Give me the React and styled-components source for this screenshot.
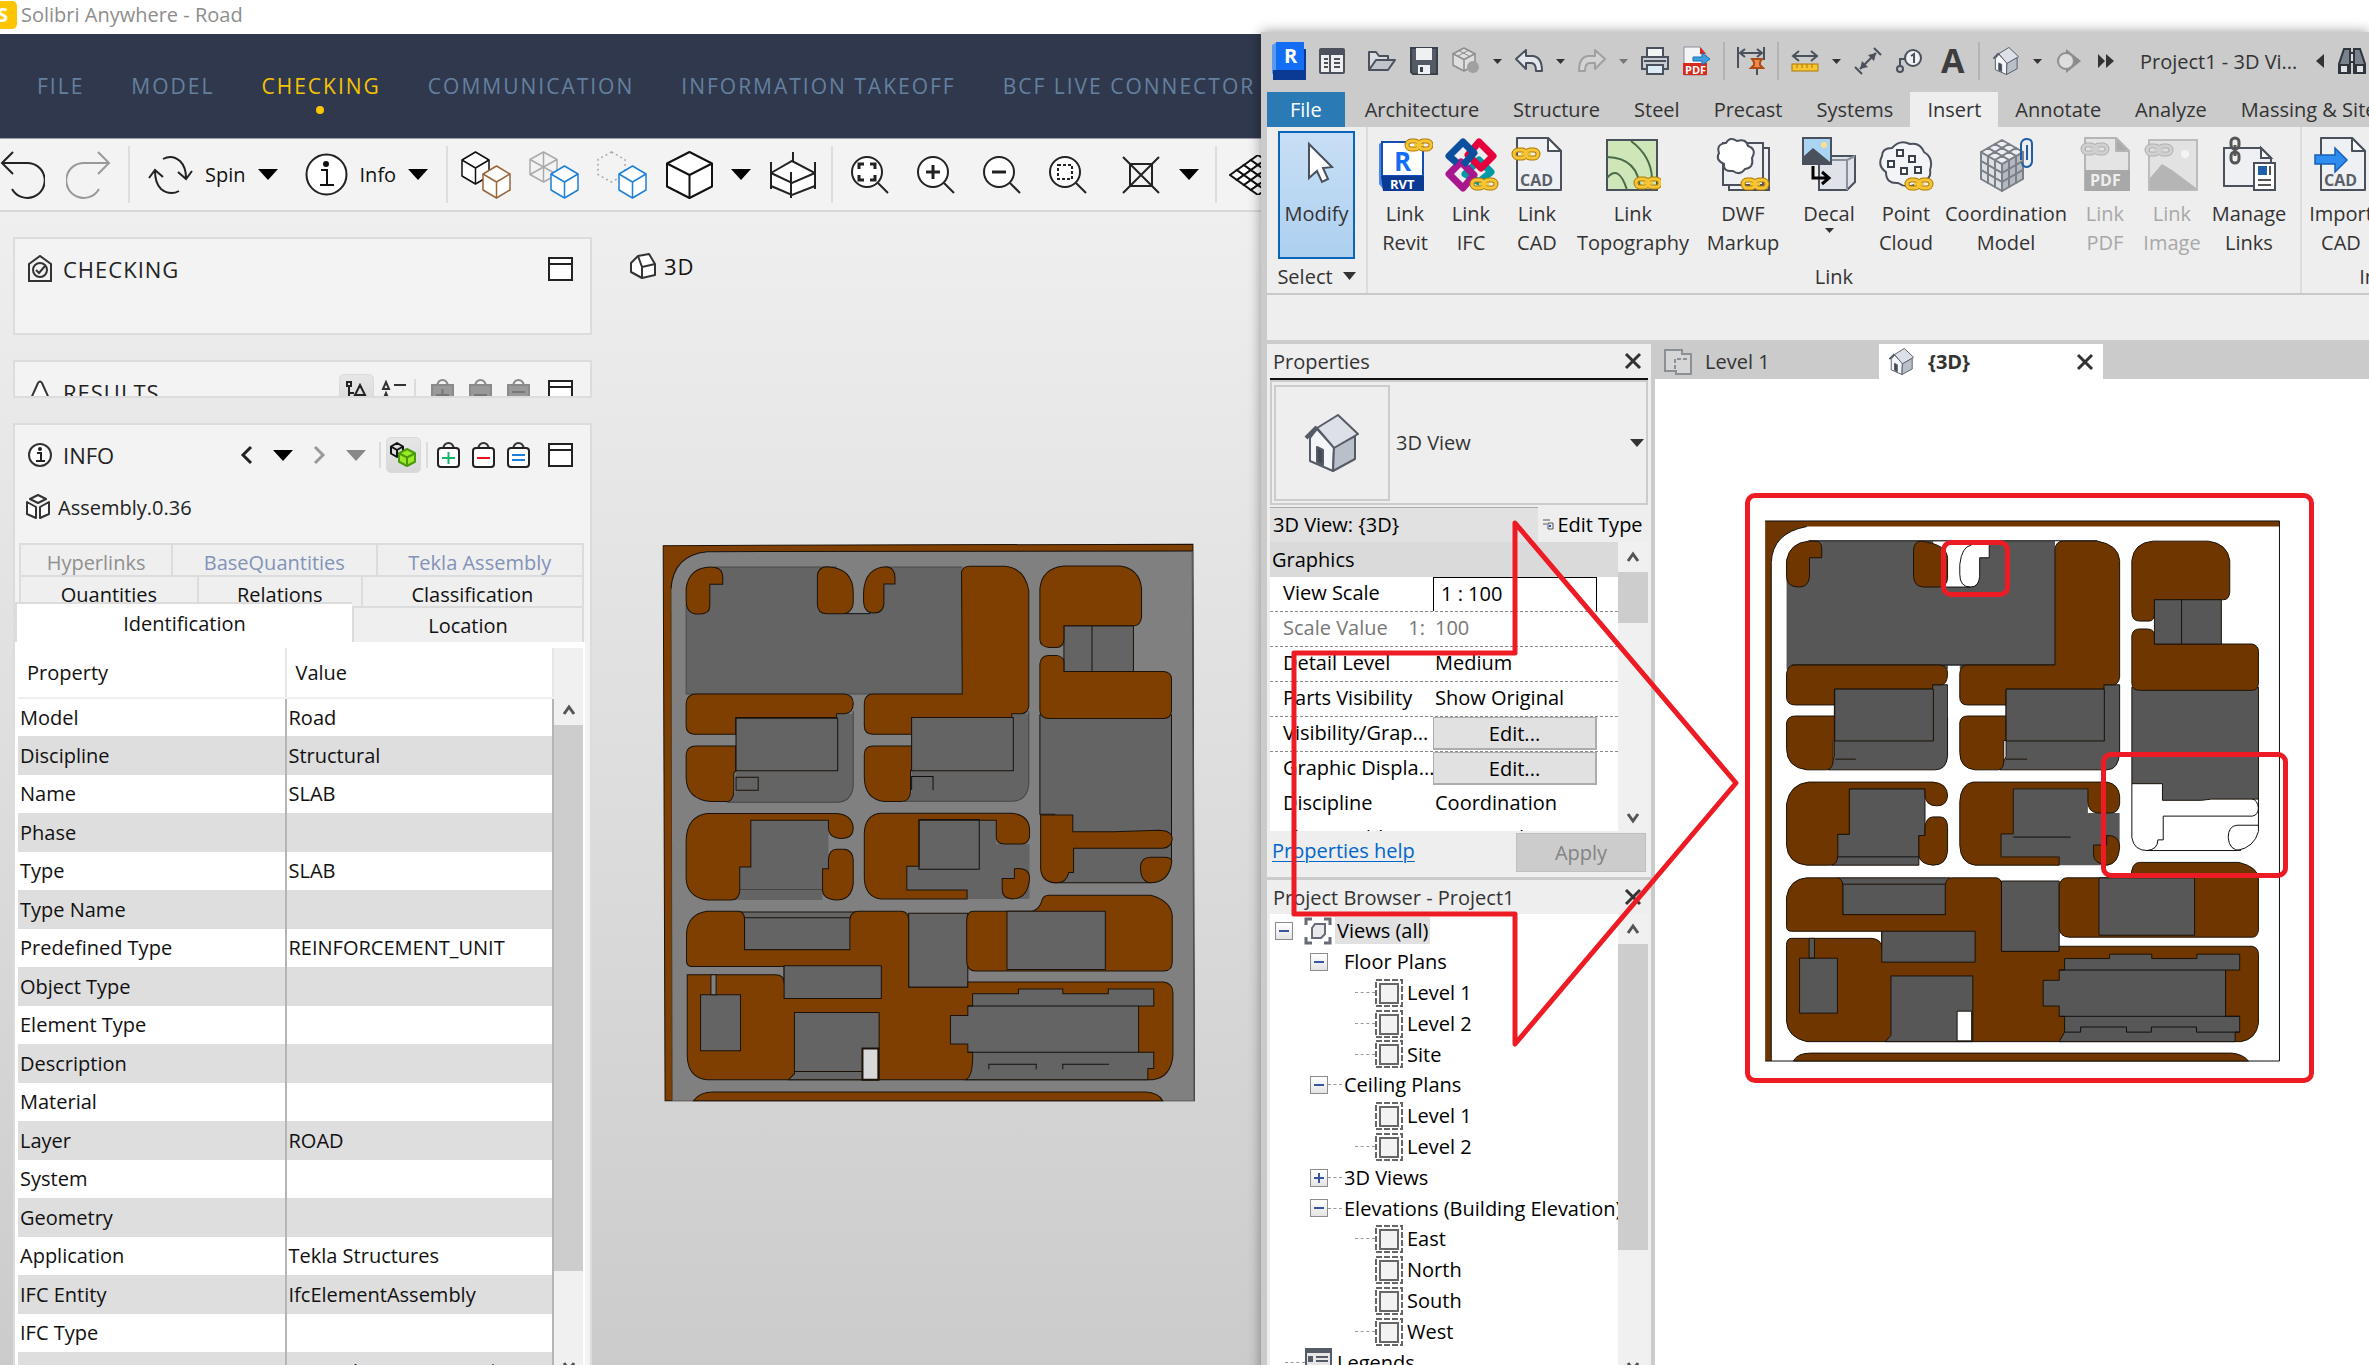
import React from "react";
import styled, { createGlobalStyle } from "styled-components";

const GlobalStyle = createGlobalStyle`
    * { box-sizing: border-box; }
    html, body, #root { height: 100%; }
    body {
        margin: 0;
        overflow: hidden;
        background: #fff;
        font-family: "Open Sans", "Noto Sans", sans-serif;
        font-size: 20px;
        color: #111;
    }
    button, input, select { font: inherit; color: inherit; }
    svg { display: block; flex: none; }
`;

/* ---------- shared ---------- */

const Desktop = styled.div`
    display: grid;
    grid-template-columns: minmax(0, 1261fr) minmax(0, 1108fr);
    height: 100vh;
`;

const PlainButton = styled.button`
    display: flex;
    align-items: center;
    gap: ${p => p.$gap || 0}px;
    padding: 0;
    border: 0;
    background: none;
    white-space: nowrap;
`;

const Tri = ({ w = 20, h = 11, color = "#000" }) => (
    <svg width={w} height={h} viewBox="0 0 20 11" preserveAspectRatio="none">
        <path d="M0 0H20L10 11Z" fill={color} />
    </svg>
);

const Cube = ({ x = 0, y = 0, w, h, stroke = "#111", fill = "#fff", dash, cross, sw = 1.5 }) => (
    <g fill={fill} stroke={stroke} strokeWidth={sw} strokeLinejoin="round" strokeDasharray={dash}>
        <path d={`M${x + w / 2} ${y}L${x + w} ${y + h / 4}V${y + h * 0.75}L${x + w / 2} ${y + h}L${x} ${y + h * 0.75}V${y + h / 4}Z`} />
        {!dash && <path fill="none" d={`M${x} ${y + h / 4}L${x + w / 2} ${y + h / 2}L${x + w} ${y + h / 4}M${x + w / 2} ${y + h / 2}V${y + h}`} />}
        {cross && <path fill="none" d={`M${x + w / 2} ${y}V${y + h / 2}M${x} ${y + h * 0.75}L${x + w / 2} ${y + h / 2}L${x + w} ${y + h * 0.75}`} />}
    </g>
);

const House = ({ size = 28 }) => (
    <svg width={size} height={size} viewBox="0 0 54 58">
        <g stroke="#555b66" strokeWidth="2" strokeLinejoin="round">
            <path d="M12 15L29 33L28 57L5 47V24Z" fill="#f3f5f8" />
            <path d="M29 33L50 22V45L28 57Z" fill="#b9c0ca" />
            <path d="M33 1L53 20L29 34L12 14Z" fill="#dde1e7" />
            <path d="M12 13L1 24" strokeWidth="4" />
            <path d="M12 33L18 36V51L12 48Z" fill="#444b57" />
        </g>
    </svg>
);

/* ---------- Solibri window ---------- */

const Solibri = styled.section`
    display: flex;
    flex-direction: column;
    min-width: 0;
    overflow: hidden;
`;

const TitleBar = styled.header`
    display: flex;
    flex: none;
    align-items: center;
    gap: 4px;
    height: 34px;
    padding-bottom: 5px;
    color: #8d8d8d;
`;

const MenuBar = styled.nav`
    display: flex;
    flex: none;
    align-items: center;
    gap: 47px;
    height: 105px;
    padding: 0 0 0 37px;
    background: #30384d;
    border-bottom: 1px solid #9a9fac;
`;

const MenuItem = styled.button`
    position: relative;
    padding: 0;
    border: 0;
    background: none;
    font-size: 21px;
    letter-spacing: 2px;
    white-space: nowrap;
    color: ${p => (p.$active ? "#f5c400" : "#64809f")};
    &::after {
        content: "";
        display: ${p => (p.$active ? "block" : "none")};
        position: absolute;
        left: 50%;
        bottom: -14px;
        width: 8px;
        height: 8px;
        margin-left: -5px;
        border-radius: 50%;
        background: #fdc500;
    }
`;

const Toolbar = styled.div`
    display: flex;
    align-items: center;
    height: 73px;
    flex: none;
    background: #f3f3f3;
    border-bottom: 2px solid #d8d8d8;
`;

const ToolGroup = styled.div`
    display: flex;
    flex: none;
    align-items: center;
    gap: ${p => p.$gap}px;
    margin-right: ${p => p.$right || 0}px;
`;

const ToolSep = styled.span`
    flex: none;
    width: 2px;
    height: 57px;
    margin: 0 ${p => p.$right || 18}px 0 ${p => p.$left || 17}px;
    background: #dedede;
`;

const Body = styled.div`
    display: grid;
    grid-template-columns: 579px minmax(0, 1fr);
    flex: 1;
    min-height: 0;
    padding-left: 13px;
    background: linear-gradient(#efefef, #e4e4e4 30%, #cbcbcb);
`;

const Side = styled.aside`
    display: flex;
    flex-direction: column;
    gap: 25px;
    min-height: 0;
    padding-top: 25px;
`;

const Panel = styled.section`
    display: flex;
    flex-direction: column;
    flex: ${p => (p.$h ? "none" : "1")};
    height: ${p => (p.$h ? p.$h + "px" : "auto")};
    min-height: 0;
    overflow: hidden;
    border: 2px solid #dcdcdc;
    border-bottom-width: ${p => (p.$h ? 2 : 0)}px;
    background: #f3f3f3;
`;

const PanelHead = styled.div`
    display: flex;
    flex: none;
    align-items: center;
    height: 60px;
    padding: 0 17px 0 12px;
`;

const PanelTitle = styled.h2`
    flex: 1;
    margin: 0 0 0 10px;
    font-size: 22px;
    font-weight: 400;
    letter-spacing: ${p => (p.$tight ? 0 : 1)}px;
    color: #222;
`;

const HeadTools = styled.div`
    display: flex;
    align-items: center;
    gap: ${p => p.$gap}px;
    margin-right: ${p => p.$right}px;
`;

const HeadSep = styled.span`
    width: 2px;
    height: 26px;
    background: #dcdcdc;
`;

const HeadToggle = styled.button`
    display: flex;
    align-items: center;
    justify-content: center;
    width: 35px;
    height: 36px;
    padding: 0;
    border: 1px solid #dadada;
    border-radius: 5px;
    background: linear-gradient(#e6e6e6, #d8d8d8);
`;

const AssemblyRow = styled.div`
    display: flex;
    flex: none;
    align-items: center;
    gap: 7px;
    height: 44px;
    margin-bottom: 14px;
    padding-left: 10px;
    color: #222;
`;

const Tabs = styled.div`
    display: flex;
    height: ${p => p.$h}px;
    margin: 0 6px 0 ${p => (p.$front ? 0 : 4)}px;
    border-right: 2px solid #dcdcdc;
`;

const Tab = styled.button`
    flex: ${p => p.$w} 1 0;
    align-self: flex-start;
    min-width: 0;
    height: ${p => (p.$active ? 40 : 36)}px;
    margin-top: ${p => (p.$active ? -4 : 0)}px;
    padding: 2px 0 0;
    overflow: hidden;
    border: 0;
    border-top: 2px solid #dcdcdc;
    border-left: 2px solid #dcdcdc;
    background: ${p => (p.$active ? "#fff" : "#efefef")};
    color: ${p => p.$color || "#111"};
    line-height: 28px;
`;

const TabStack = styled.div`
    flex: none;
`;

const TableArea = styled.div`
    display: flex;
    flex: 1;
    min-height: 0;
    margin-right: 5px;
    padding: 6px 2px 0 3px;
    background: #fff;
    overflow: hidden;
`;

const PropTable = styled.table`
    flex: 1;
    align-self: flex-start;
    width: 100%;
    table-layout: fixed;
    border-collapse: collapse;
    th {
        width: 50%;
        height: 50px;
        padding: 0 0 0 9px;
        border-right: 2px solid #e6e6e6;
        border-bottom: 2px solid #f0f0f0;
        text-align: left;
        font-weight: 400;
        line-height: 28px;
    }
    td {
        height: 38px;
        padding: 0 0 0 2px;
        border-right: 2px solid #b5b5b5;
        line-height: 28px;
        white-space: nowrap;
    }
    tbody tr:nth-child(even) td {
        height: 39px;
        background: #dedede;
    }
`;

const Scroll = styled.div`
    display: flex;
    flex: none;
    flex-direction: column;
    align-items: center;
    justify-content: space-between;
    width: ${p => p.$w}px;
    padding: ${p => p.$top}px 0 ${p => p.$bottom}px;
    background: #f0f0f0;
`;

const Thumb = styled.div`
    flex: none;
    width: 100%;
    height: ${p => p.$h}px;
    margin-top: 5px;
    margin-bottom: auto;
    background: #cdcdcd;
`;

const Viewport = styled.main`
    display: flex;
    flex-direction: column;
    min-width: 0;
    padding-left: 38px;
`;

const ViewTitle = styled.div`
    display: flex;
    align-items: center;
    gap: 8px;
    height: 108px;
    font-size: 22px;
    letter-spacing: 1px;
`;

const ViewStage = styled.div`
    display: flex;
    justify-content: center;
    padding: 223px 33px 0 0;
`;

const WindowIcon = () => (
    <svg width="25" height="24" viewBox="0 0 25 24">
        <rect x="1" y="1" width="23" height="22" fill="#fff" stroke="#222" strokeWidth="2" />
        <path d="M1 7H24" stroke="#222" strokeWidth="2" />
    </svg>
);

const Bag = ({ mark, color, gray }) => (
    <svg width="23" height="26" viewBox="0 0 23 26" fill="none" strokeWidth="2">
        <path d="M6 7Q7 1 11.500 1Q16 1 17 7" stroke={gray ? "#8a8a8a" : "#333"} />
        <rect x="1" y="6" width="21" height="19" rx={gray ? 0 : 3} fill={gray ? "#999" : "#fff"} stroke={gray ? "#8a8a8a" : "#222"} />
        {mark === "plus" && <path d="M5 16H18M11.500 10V22" stroke={color} />}
        {mark === "minus" && <path d="M5 16H18" stroke={color} />}
        {mark === "equal" && <path d="M5 13H18M5 18H18" stroke={color} />}
    </svg>
);

const Chevron = ({ dir = "left", color = "#222", w = 13, h = 20 }) => {
    const d = {
        left: "M11 2L3 10L11 18",
        right: "M2 2L10 10L2 18",
        up: "M2 14L7 7L12 14",
        down: "M2 6L7 13L12 6",
    }[dir];
    return (
        <svg width={w} height={h} viewBox={dir === "up" || dir === "down" ? "0 0 14 20" : "0 0 13 20"}>
            <path d={d} fill="none" stroke={color} strokeWidth="3" />
        </svg>
    );
};

const Magnifier = ({ children }) => (
    <svg width="38" height="40" viewBox="0 0 38 40" fill="none" stroke="#222" strokeWidth="2">
        <circle cx="16" cy="17" r="15" fill="#fff" />
        <path d="M27 28L37 38" />
        {children}
    </svg>
);

const UndoArrow = ({ flip, color }) => (
    <svg width="45" height="50" viewBox="0 0 45 50" fill="none" stroke={color} strokeWidth="2">
        <g transform={flip ? "matrix(-1 0 0 1 45 0)" : undefined}>
            <path d="M13 2L2 13L13 24M2 13H26A17.500 17.500 0 1 1 12 39" />
        </g>
    </svg>
);

const SolibriTools = () => (
    <Toolbar>
        <ToolGroup $gap={21}>
            <PlainButton aria-label="Undo"><UndoArrow color="#222" /></PlainButton>
            <PlainButton aria-label="Redo"><UndoArrow flip color="#999" /></PlainButton>
        </ToolGroup>
        <ToolSep />
        <ToolGroup $gap={27}>
            <PlainButton $gap={12}>
                <svg width="45" height="44" viewBox="0 0 45 44" fill="none" stroke="#222" strokeWidth="2">
                    <path d="M15 6Q24 1 32 8Q38 14 38 25M30 19L38 26L44 18M31 38Q22 43 13 36Q7 30 7 18M1 25L7 17L15 24" />
                </svg>
                Spin <Tri />
            </PlainButton>
            <PlainButton $gap={12}>
                <svg width="43" height="43" viewBox="0 0 43 43">
                    <circle cx="21.500" cy="21.500" r="20" fill="#fff" stroke="#222" strokeWidth="2" />
                    <circle cx="21" cy="11" r="3" fill="#111" />
                    <path d="M16 17H22V32M15 32H29" stroke="#111" strokeWidth="2" fill="none" />
                </svg>
                Info <Tri />
            </PlainButton>
        </ToolGroup>
        <ToolSep $right={13} $left={18} />
        <ToolGroup $gap={18}>
            <PlainButton aria-label="Components">
                <svg width="50" height="50" viewBox="0 0 50 50">
                    <Cube x={1} y={2} w={27} h={32} /><Cube x={22} y={16} w={27} h={32} stroke="#9b6438" />
                </svg>
            </PlainButton>
            <PlainButton aria-label="Transparent">
                <svg width="50" height="50" viewBox="0 0 50 50">
                    <Cube x={1} y={2} w={27} h={30} stroke="#aaa" fill="none" cross /><Cube x={22} y={16} w={27} h={32} stroke="#1c7fd8" />
                </svg>
            </PlainButton>
            <PlainButton aria-label="Hide others">
                <svg width="50" height="50" viewBox="0 0 50 50">
                    <Cube x={1} y={2} w={27} h={30} stroke="#aaa" fill="none" dash="2 3" /><Cube x={22} y={16} w={27} h={32} stroke="#1c7fd8" />
                </svg>
            </PlainButton>
            <PlainButton $gap={16} aria-label="View cube">
                <svg width="50" height="50" viewBox="0 0 50 50"><Cube x={2} y={2} w={45} h={46} sw={2} /></svg>
                <Tri />
            </PlainButton>
            <PlainButton aria-label="Section">
                <svg width="48" height="50" viewBox="0 0 48 50" fill="none" stroke="#222" strokeWidth="2">
                    <path d="M2 23L23 11L46 23V36L23 45L2 36Z" fill="#fff" />
                    <path d="M2 12V39M46 12V39M24 2V11M22 22V48M2 23L23 33L46 23" />
                </svg>
            </PlainButton>
        </ToolGroup>
        <ToolSep $left={14} />
        <ToolGroup $gap={28}>
            <PlainButton aria-label="Zoom to fit">
                <Magnifier><path strokeWidth="3" d="M8 14V9H13M19 9H24V14M8 20V25H13M24 20V25H19" /></Magnifier>
            </PlainButton>
            <PlainButton aria-label="Zoom in">
                <Magnifier><path strokeWidth="3" d="M9 17H23M16 10V24" /></Magnifier>
            </PlainButton>
            <PlainButton aria-label="Zoom out">
                <Magnifier><path strokeWidth="3" d="M9 17H23" /></Magnifier>
            </PlainButton>
            <PlainButton aria-label="Zoom window">
                <Magnifier><rect x="9" y="10" width="14" height="14" strokeDasharray="3 2" /></Magnifier>
            </PlainButton>
            <PlainButton $gap={12} aria-label="Section box">
                <svg width="52" height="40" viewBox="0 0 52 40" fill="none" stroke="#222" strokeWidth="2">
                    <path d="M8 2L15 9M44 2L37 9M8 38L15 31M44 38L37 31M15 9H37V31H15ZM15 9L37 31M37 9L15 31" />
                </svg>
                <Tri />
            </PlainButton>
        </ToolGroup>
        <ToolSep $left={16} $right={12} />
        <svg width="60" height="40" viewBox="0 0 60 40" fill="#fff" stroke="#111" strokeWidth="2">
            {[0, 1, 2, 3].map(i => [0, 1, 2, 3].map(j => (
                <path key={i + "-" + j} d={`M${1 + (i + j) * 7} ${20 + (i - j) * 5}l7 -5l7 5l-7 5Z`} />
            )))}
        </svg>
    </Toolbar>
);

const properties = [
    ["Model", "Road"],
    ["Discipline", "Structural"],
    ["Name", "SLAB"],
    ["Phase", ""],
    ["Type", "SLAB"],
    ["Type Name", ""],
    ["Predefined Type", "REINFORCEMENT_UNIT"],
    ["Object Type", ""],
    ["Element Type", ""],
    ["Description", ""],
    ["Material", ""],
    ["Layer", "ROAD"],
    ["System", ""],
    ["Geometry", ""],
    ["Application", "Tekla Structures"],
    ["IFC Entity", "IfcElementAssembly"],
    ["IFC Type", ""],
    ["GUID", "00002dT3-DP_DDort_$PTVT"],
];

const InfoTabs = () => (
    <TabStack>
        <Tabs $h={32}>
            <Tab $w={152} $color="#8f8f8f">Hyperlinks</Tab>
            <Tab $w={205} $color="#8292b8">BaseQuantities</Tab>
            <Tab $w={207} $color="#8292b8">Tekla Assembly</Tab>
        </Tabs>
        <Tabs $h={31}>
            <Tab $w={178}>Quantities</Tab>
            <Tab $w={164}>Relations</Tab>
            <Tab $w={222}>Classification</Tab>
        </Tabs>
        <Tabs $h={36} $front>
            <Tab $w={338} $active>Identification</Tab>
            <Tab $w={230}>Location</Tab>
        </Tabs>
    </TabStack>
);

const InfoPanel = () => (
    <Panel>
        <PanelHead>
            <svg width="26" height="26" viewBox="0 0 26 26">
                <circle cx="13" cy="13" r="11" fill="#fff" stroke="#333" strokeWidth="2" />
                <path d="M10 11H14V19M9 19H18" stroke="#222" strokeWidth="2" fill="none" />
                <circle cx="13" cy="7" r="2" fill="#222" />
            </svg>
            <PanelTitle $tight>INFO</PanelTitle>
            <HeadTools $gap={20} $right={13}>
                <PlainButton aria-label="Back"><Chevron /></PlainButton>
                <PlainButton aria-label="Back history"><Tri /></PlainButton>
                <PlainButton aria-label="Forward"><Chevron dir="right" color="#999" /></PlainButton>
                <PlainButton aria-label="Forward history"><Tri color="#888" /></PlainButton>
            </HeadTools>
            <HeadTools $gap={5} $right={9}>
                <HeadSep />
                <HeadToggle aria-label="Show assembly">
                    <svg width="27" height="26" viewBox="0 0 27 26">
                        <Cube x={1} y={1} w={12} h={14} fill="#ddd" sw={2} />
                        <Cube x={9} y={7} w={16} h={17} stroke="#4c9a0c" fill="#9bea2a" sw={2} />
                    </svg>
                </HeadToggle>
                <HeadSep />
            </HeadTools>
            <HeadTools $gap={12} $right={18}>
                <PlainButton aria-label="Add"><Bag mark="plus" color="#12b76a" /></PlainButton>
                <PlainButton aria-label="Remove"><Bag mark="minus" color="#e8121c" /></PlainButton>
                <PlainButton aria-label="Set"><Bag mark="equal" color="#1c7fd8" /></PlainButton>
            </HeadTools>
            <PlainButton aria-label="Maximize"><WindowIcon /></PlainButton>
        </PanelHead>
        <AssemblyRow>
            <svg width="26" height="26" viewBox="0 0 26 26" fill="#fff" stroke="#333" strokeWidth="2" strokeLinejoin="round">
                <path d="M13 1L21 5L13 9L5 5ZM2 8L11 13V24L2 20ZM24 8L15 13V24L24 20Z" />
            </svg>
            Assembly.0.36
        </AssemblyRow>
        <InfoTabs />
        <TableArea>
            <PropTable>
                <thead>
                    <tr><th>Property</th><th>Value</th></tr>
                </thead>
                <tbody>
                    {properties.map(([name, value]) => (
                        <tr key={name}><td>{name}</td><td>{value}</td></tr>
                    ))}
                </tbody>
            </PropTable>
            <Scroll $w={29} $top={52} $bottom={0}>
                <Chevron dir="up" color="#555" w={14} />
                <Thumb $h={546} />
                <Chevron dir="down" color="#555" w={14} />
            </Scroll>
        </TableArea>
    </Panel>
);

const SolibriWindow = ({ children }) => (
    <Solibri>
        <TitleBar>
            <svg width="17" height="28" viewBox="0 0 17 28">
                <rect x="-11" y="0" width="28" height="28" rx="5" fill="#fdc500" />
                <text x="-3" y="21" fontSize="20" fontWeight="700" fill="#fff">S</text>
            </svg>
            Solibri Anywhere - Road
        </TitleBar>
        <MenuBar>
            <MenuItem>FILE</MenuItem>
            <MenuItem>MODEL</MenuItem>
            <MenuItem $active>CHECKING</MenuItem>
            <MenuItem>COMMUNICATION</MenuItem>
            <MenuItem>INFORMATION TAKEOFF</MenuItem>
            <MenuItem>BCF LIVE CONNECTOR</MenuItem>
        </MenuBar>
        <SolibriTools />
        <Body>
            <Side>
                <Panel $h={98}>
                    <PanelHead>
                        <svg width="26" height="28" viewBox="0 0 26 28" fill="none" stroke="#333" strokeWidth="2">
                            <path d="M2 9L13 1L24 9V26H2Z" />
                            <circle cx="13" cy="15" r="7" />
                            <path d="M9 15L12 18L18 11" />
                        </svg>
                        <PanelTitle>CHECKING</PanelTitle>
                        <PlainButton aria-label="Maximize"><WindowIcon /></PlainButton>
                    </PanelHead>
                </Panel>
                <Panel $h={38}>
                    <PanelHead>
                        <svg width="26" height="26" viewBox="0 0 26 26">
                            <path d="M2 24L11 4Q13 1 15 4L24 24Z" fill="#fff" stroke="#333" strokeWidth="2" />
                        </svg>
                        <PanelTitle>RESULTS</PanelTitle>
                        <HeadTools $gap={7} $right={7}>
                            <HeadToggle aria-label="Tree">
                                <svg width="21" height="22" viewBox="0 0 21 22" fill="none" stroke="#222" strokeWidth="2">
                                    <path d="M1 1H5V5H1ZM3 5V18H8M3 12H8M9 14L14 4L19 14ZM12 20L14 17L16 20" />
                                </svg>
                            </HeadToggle>
                            <PlainButton aria-label="List">
                                <svg width="26" height="26" viewBox="0 0 26 26" fill="none" stroke="#333" strokeWidth="2">
                                    <path d="M2 10L5 3L8 10ZM2 21L5 14L8 21ZM13 6H25M13 18H25" />
                                </svg>
                            </PlainButton>
                        </HeadTools>
                        <HeadTools $gap={15} $right={18}>
                            <HeadSep />
                            <Bag mark="plus" color="#777" gray />
                            <Bag mark="minus" color="#777" gray />
                            <Bag mark="equal" color="#777" gray />
                        </HeadTools>
                        <PlainButton aria-label="Maximize"><WindowIcon /></PlainButton>
                    </PanelHead>
                </Panel>
                <InfoPanel />
            </Side>
            <Viewport>
                <ViewTitle>
                    <svg width="26" height="26" viewBox="0 0 26 26" fill="#fff" stroke="#333" strokeWidth="2" strokeLinejoin="round">
                        <path d="M8 3L19 1L25 11V22L12 25L1 19V10Z" />
                        <path d="M8 3L12 14V25M12 14L25 11" fill="none" />
                    </svg>
                    3D
                </ViewTitle>
                {children}
            </Viewport>
        </Body>
    </Solibri>
);

/* ---------- site plans ---------- */

const Soil = styled.path`
    fill: ${p => p.$c};
    stroke: #1a1208;
    stroke-width: ${p => p.$sw || 1}px;
    vector-effect: non-scaling-stroke;
`;

const Line = styled.path`
    fill: none;
    stroke: ${p => p.$c || "#111"};
    stroke-width: 1px;
    vector-effect: non-scaling-stroke;
`;

const ShadedPlan = () => {
    const soil = "#7f3f00";
    const lot = "#646464";
    const road = "#808080";
    return (
        <svg width="536" height="560" viewBox="55 38 1450 1490" preserveAspectRatio="none">
            <Soil $c={soil} d="M61 45L1494 41L1498 1522H66Z" />
            <path fill={road} d="M85 1522L82 160Q88 70 180 61L1494 59L1498 1522Z" />
            <Line d="M82 160Q88 70 180 61L1494 59" />
            <Line $c="#4d4d4d" d="M1492 59L1497 1522" />
            <Line $c="#4d3a22" d="M85 1522L82 160" />
            {/* north block */}
            <path fill={lot} d="M123 150L180 102H870V440H123Z" />
            <Line $c="#4a4a4a" d="M200 102H870M123 200V440H870" />
            <path fill={road} d="M530 98H665L620 225H550Z" />
            <Line d="M550 226H622" />
            <Soil $c={soil} d="M222 148H187V205Q187 227 160 227Q123 230 123 190V160Q130 103 190 102Q222 102 222 130Z" />
            <Soil $c={soil} d="M478 125Q480 101 505 101Q575 105 575 170V195Q573 226 545 226H505Q478 226 478 200Z" />
            <Soil $c={soil} d="M688 147H658V200Q656 224 632 224Q603 224 603 190V170Q606 103 665 101Q688 103 688 130Z" />
            {/* middle blocks */}
            <path fill={lot} d="M257 492H575V685Q570 728 530 728H235L257 700Z" />
            <path fill={lot} d="M733 492H1050V680Q1045 725 1005 725H712L733 700Z" />
            <Line $c="#444" d="M575 485V685Q570 728 530 728H235M1050 485V680Q1045 725 1005 725H712" />
            <Soil $c={soil} d="M868 115Q872 100 890 100H985Q1040 105 1050 165V470Q1048 492 1030 492H1004V502H733V547H630Q605 547 605 525V465Q606 440 630 440H870Z" />
            <Soil $c={soil} d="M123 465Q125 440 150 440H550Q575 442 575 465Q575 492 550 492H530V502H257V547H145Q123 545 123 525Z" />
            <Soil $c={soil} d="M123 600Q125 578 150 578H257V645L252 650V700Q250 728 230 726H190Q123 720 123 660Z" />
            <Soil $c={soil} d="M605 600Q605 578 630 578H733V640L730 645V700Q728 726 705 726H660Q605 720 605 660Z" />
            <Soil $c={lot} d="M258 504H533V644H258ZM258 661H318V696H258Z" />
            <Soil $c={lot} d="M733 502H1008V644H733Z" />
            <Line d="M733 695V659H791V696" />
            {/* east column */}
            <Soil $c={lot} d="M1145 258H1333V380H1145ZM1221 258V380" />
            <Soil $c={soil} d="M1080 160Q1085 105 1145 99H1295Q1350 105 1355 160V235Q1352 258 1335 258H1145V295Q1143 316 1125 316H1105Q1080 314 1080 295Z" />
            <Soil $c={lot} d="M1080 495H1436V880Q1430 942 1370 942H1120V760H1080Z" />
            <Soil $c={soil} d="M1080 360Q1082 337 1105 337H1125Q1145 340 1145 355V380H1415Q1436 382 1436 400V485Q1434 505 1415 505H1105Q1082 505 1080 485Z" />
            <Soil $c={soil} d="M1082 762H1169V806H1280L1400 802Q1438 802 1438 826Q1436 850 1410 850H1171V915H1158Q1152 942 1125 942Q1085 942 1082 905Z" />
            <Soil $c={soil} d="M1437 885Q1430 942 1378 942Q1352 938 1352 900Q1354 874 1380 874H1415Q1437 874 1437 885Z" />
            {/* third row */}
            <path fill={lot} d="M298 776H508V905H492V988H255L268 900H298Z" />
            <Line $c="#444" d="M268 960H492" />
            <Soil $c={soil} d="M123 830Q125 765 180 758H530Q575 762 575 800Q572 824 545 824Q508 824 508 795V776H298V900H268V965Q265 988 245 988H180Q125 980 123 930Z" />
            <Soil $c={soil} d="M508 880Q510 853 530 853H550Q575 855 575 885V945Q570 988 530 988Q492 986 492 960V905H508Z" />
            <path fill={lot} d="M752 776H962V839H1052V985H883V961H720V898H752Z" />
            <Soil $c={soil} d="M605 810Q607 760 650 757H1005Q1050 762 1052 800V820Q1048 839 1030 839H985Q962 838 962 820V776H753V898H720V961H883V985H650Q607 980 605 930Z" />
            <Line d="M753 774H916V906H753Z" />
            <Soil $c={soil} d="M1011 905Q1052 900 1052 930Q1048 985 1005 985Q978 983 978 960V931H1011Z" />
            {/* south blocks */}
            <Soil $c={lot} d="M270 1020H580V1120H281V1035ZM281 1035H566" />
            <Soil $c={lot} d="M725 1023H885V1220H725Z" />
            <Soil $c={soil} d="M124 1080Q126 1025 180 1018H265Q281 1020 281 1040V1120H566V1040Q568 1018 590 1018H705Q725 1020 725 1040V1220H885V1206H1415Q1440 1210 1440 1235V1400Q1435 1460 1385 1466H180Q126 1460 126 1400V1187H365Q388 1187 388 1210V1165H140Q124 1165 124 1150Z" />
            <Soil $c={lot} d="M388 1163H651V1250H388ZM162 1240H270V1389H162Z" />
            <Soil $c={road} d="M190 1187H204V1240H190Z" />
            <Soil $c={lot} d="M416 1287H645V1466H400L416 1450ZM416 1444H645" />
            <Soil $c="#d8d8d8" $sw={2} d="M600 1383H643V1466H600Z" />
            <Soil $c={lot} d="M898 1237H1022V1225H1142V1237H1265V1225H1388V1270H1347V1393H1388V1436H1372V1466H880Q900 1455 898 1393H885V1371H838V1295H885V1270H898Z" />
            <Line d="M885 1270H1347M885 1393H1347M942 1438V1425H1070V1438M1142 1438V1425H1267" />
            <Soil $c={soil} d="M882 1040Q884 1018 900 1018H1060Q1080 1010 1085 990Q1088 975 1105 975H1380Q1435 990 1438 1030V1155Q1436 1177 1415 1177H905Q882 1175 882 1150Z" />
            <Soil $c={lot} d="M991 1018H1257V1173H991Z" />
            <Soil $c={soil} d="M143 1522Q160 1498 200 1499H1365Q1400 1500 1412 1522Z" />
        </svg>
    );
};

const ImportedPlan = () => {
    const soil = "#703600";
    const lot = "#575757";
    return (
        <svg width="517" height="544" viewBox="88 100 1352 1375" preserveAspectRatio="none">
            <path fill={soil} d="M91 105H1436V119H200Q110 135 107 210V1470H91Z" />
            <Line d="M91 105H1436V1470H91M200 119Q110 135 107 210V1470" />
            {/* north block */}
            <path fill={lot} d="M147 200L205 155H849V480H147Z" />
            <Line d="M205 155H960M160 469H849" />
            <Soil $c={soil} d="M239 198H207V245Q205 272 180 272Q147 272 147 245V205Q155 160 205 156H225Q239 158 239 175Z" />
            <path fill="#fff" d="M530 157H677V198H652V245Q650 272 628 272H545Z" />
            <Line d="M677 166V198H652V245Q650 272 628 272H555M628 272Q600 272 600 240V215Q605 170 630 166" />
            <Soil $c={soil} d="M479 180Q480 156 500 156Q568 165 568 200V250Q566 272 545 272H505Q480 270 479 245Z" />
            {/* middle blocks */}
            <Soil $c={lot} d="M272 519H568V700Q565 734 535 734H255L272 700Z" />
            <Soil $c={lot} d="M721 519H1018V690Q1015 734 985 734H705L721 700Z" />
            <path fill="#fff" d="M569 471H600V600H569Z" />
            <Soil $c={soil} d="M849 175Q852 156 870 156H960Q1015 165 1018 205V500Q1015 519 1000 519H977V530H721V570H620Q600 570 600 550V490Q602 469 620 469H849Z" />
            <Soil $c={soil} d="M147 490Q150 469 170 469H545Q568 470 568 490Q568 519 550 519H529V530H272V570H170Q147 570 147 550Z" />
            <Soil $c={soil} d="M147 615Q150 598 170 598H272V660L269 662V710Q268 734 250 734H200Q147 728 147 680Z" />
            <Soil $c={soil} d="M600 615Q602 598 620 598H721V660H715V710Q715 734 700 734H640Q600 730 600 690Z" />
            <Soil $c={lot} d="M273 530H531V661H273ZM274 707H328" />
            <Soil $c={lot} d="M721 530H978V661H721ZM721 707H776" />
            {/* east column */}
            <Soil $c={soil} d="M1050 205Q1055 160 1105 156H1250Q1300 162 1306 205V285Q1304 304 1290 304H1109V340Q1108 358 1095 358H1070Q1050 358 1050 335Z" />
            <Soil $c={lot} d="M1050 525H1381V808H1258L1232 811H1130V769H1050Z" />
            <Soil $c={soil} d="M1050 395Q1052 378 1070 378H1090Q1109 378 1109 395V416H1365Q1381 420 1381 435V515Q1380 533 1365 533H1070Q1050 533 1050 515Z" />
            <Soil $c={lot} d="M1109 304H1284V416H1109ZM1180 304V416" />
            <Line d="M1050 769V905Q1055 938 1090 938Q1118 935 1118 911H1132V851H1365Q1381 848 1381 830Q1378 810 1365 808" />
            <Line d="M1381 805V890Q1370 930 1325 938H1088M1381 874H1325Q1302 876 1302 905Q1304 938 1335 938" />
            {/* third row */}
            <Soil $c={lot} d="M311 782H509V900H493V975H265L281 897H311Z" />
            <Line d="M281 954H493" />
            <Soil $c={soil} d="M147 820Q155 770 205 765H530Q568 768 568 800Q566 825 540 825Q509 825 509 795V782H311V897H281V950Q280 975 262 975H200Q150 970 147 925Z" />
            <Soil $c={soil} d="M509 880Q512 853 530 853H550Q568 855 568 880V940Q565 975 530 975Q495 972 493 950V900H509Z" />
            <path fill={lot} d="M740 782H935V843H1018V930H990V975H860V954H708V896H740Z" />
            <Soil $c={soil} d="M600 815Q602 770 635 765H985Q1015 770 1018 800V820Q1015 843 995 843H960Q935 840 935 815V782H740V896H708V954H860V975H640Q602 970 600 925Z" />
            <Soil $c={soil} d="M950 924H984V900Q1018 898 1018 930Q1015 972 985 975Q950 970 950 950Z" />
            <Line d="M740 904H890" />
            {/* south blocks */}
            <Soil $c={lot} d="M280 1007H575V1100H294V1023ZM294 1023H562" />
            <Soil $c={lot} d="M709 1015H860V1193H709Z" />
            <Soil $c={soil} d="M147 1055Q155 1010 200 1007H280Q294 1010 294 1025V1100H562V1025Q565 1007 580 1007H695Q709 1008 709 1025V1193H860V1180H1365Q1381 1184 1381 1200V1375Q1375 1415 1335 1421H200Q150 1410 147 1370V1175Q148 1160 160 1160H370Q396 1162 396 1185V1142H160Q147 1142 147 1130Z" />
            <Soil $c={lot} d="M396 1142H640V1220H396ZM181 1210H280V1349H181ZM206 1160H220V1210H206Z" />
            <Soil $c={lot} d="M420 1255H634V1421H405L420 1405Z" />
            <Soil $c="#fff" d="M593 1344H631V1419H593Z" />
            <Soil $c={lot} d="M874 1211H992V1200H1102V1211H1220V1200H1332V1240H1295V1357H1332V1397H1320V1421H860L874 1397V1357H860V1331H818V1266H860V1240H874Z" />
            <Line d="M860 1240H1295M860 1357H1332M874 1397H916V1384H1036V1397H1101V1384H1219V1397H1332" />
            <Soil $c={soil} d="M860 1025Q865 1007 880 1007H1048Q1048 968 1070 968H1330Q1381 980 1381 1010V1140Q1378 1157 1365 1157H885Q862 1155 860 1135Z" />
            <Soil $c={lot} d="M964 1007H1214V1152H964Z" />
            <Soil $c={soil} d="M165 1470Q175 1450 210 1450H1310Q1340 1452 1355 1470Z" />
        </svg>
    );
};

/* ---------- Revit window ---------- */

const Revit = styled.section`
    position: relative;
    z-index: 1;
    display: flex;
    flex-direction: column;
    min-width: 0;
    margin-top: 32px;
    padding-left: 6px;
    background: #cbcbcb;
    box-shadow: 0 0 12px rgba(0, 0, 0, 0.4);
    color: #333;
`;

const QuickBar = styled.div`
    display: flex;
    flex: none;
    align-items: center;
    gap: 12px;
    height: 60px;
    padding: 0 0 2px 4px;
    overflow: hidden;
`;

const QuickIcon = styled.button`
    display: flex;
    flex: none;
    align-items: center;
    justify-content: center;
    width: ${p => p.$w || 30}px;
    height: 38px;
    padding: 0;
    border: 0;
    background: none;
`;

const QuickSep = styled.span`
    flex: none;
    width: 2px;
    height: 38px;
    margin: 0 -1px;
    background: #b4b4b4;
`;

const DocTitle = styled.span`
    flex: none;
    margin: 0 6px 0 12px;
    white-space: nowrap;
`;

const RibbonTabs = styled.nav`
    display: flex;
    flex: none;
    height: 35px;
    overflow: hidden;
`;

const RibbonTab = styled.button`
    flex: none;
    padding: 0 ${p => p.$pad || 17}px;
    border: 0;
    margin-right: ${p => (p.$file ? 3 : 0)}px;
    background: ${p => (p.$file ? "#2a7ab5" : p.$active ? "#eee" : "none")};
    color: ${p => (p.$file ? "#fff" : "#333")};
    white-space: nowrap;
`;

const Ribbon = styled.div`
    display: flex;
    flex: none;
    height: 168px;
    overflow: hidden;
    background: #eee;
    border-bottom: 2px solid #c8c8c8;
`;

const RibbonGroup = styled.div`
    display: flex;
    flex: none;
    flex-direction: column;
    padding: 4px ${p => p.$pad || 0}px 0;
    border-right: 2px solid #dcdcdc;
    width: ${p => (p.$w ? p.$w + "px" : "auto")};
`;

const RibbonRow = styled.div`
    display: flex;
    height: 128px;
`;

const RibbonLabel = styled.div`
    display: flex;
    align-items: center;
    justify-content: center;
    gap: 10px;
    height: 34px;
`;

const RibbonButton = styled.button`
    display: flex;
    flex: none;
    flex-direction: column;
    align-items: center;
    width: ${p => p.$w}px;
    height: 128px;
    padding: ${p => (p.$active ? 3 : 5)}px 0 0;
    border: ${p => (p.$active ? "2px solid #0a64b8" : "0")};
    background: ${p => (p.$active ? "linear-gradient(#c8dff5, #add0f0)" : "none")};
    color: ${p => (p.$off ? "#a8a8a8" : "#333")};
    line-height: 29px;
    white-space: pre;
    svg { margin-bottom: 7px; }
`;

const OptionsBar = styled.div`
    flex: none;
    height: 45px;
    margin-bottom: 4px;
    background: #eee;
`;

const Work = styled.div`
    display: grid;
    grid-template-columns: 384px minmax(0, 1fr);
    gap: 4px;
    flex: 1;
    min-height: 0;
`;

const Docks = styled.aside`
    display: flex;
    flex-direction: column;
    gap: 3px;
    min-height: 0;
`;

const Dock = styled.section`
    display: flex;
    flex-direction: column;
    flex: ${p => (p.$grow ? "1" : "none")};
    min-height: 0;
    padding: 0 3px;
    background: #eee;
`;

const DockHead = styled.div`
    display: flex;
    flex: none;
    align-items: center;
    justify-content: space-between;
    height: ${p => (p.$line ? 36 : 34)}px;
    padding: 0 6px 0 3px;
    border-bottom: ${p => (p.$line ? "2px solid #111" : "0")};
`;

const TypeBox = styled.div`
    display: flex;
    align-items: center;
    gap: 6px;
    height: 125px;
    margin-bottom: 2px;
    padding: 2px;
    border: 2px solid #ccc;
`;

const TypeThumb = styled.div`
    display: flex;
    align-items: center;
    justify-content: center;
    width: 116px;
    height: 116px;
    border: 2px solid #ccc;
`;

const TypeName = styled.button`
    display: flex;
    flex: 1;
    align-items: center;
    justify-content: space-between;
    padding: 0;
    border: 0;
    background: none;
`;

const FilterRow = styled.div`
    display: flex;
    align-items: center;
    height: 35px;
    color: #000;
`;

const FilterSelect = styled.select`
    width: 268px;
    height: 35px;
    padding: 0 3px 1px;
    border: 0;
    border-top: 1px solid #aaa;
    appearance: none;
    background: #e1e1e1;
`;

const EditType = styled(PlainButton)`
    flex: 1;
    justify-content: center;
    padding-bottom: 1px;
    color: #000;
`;

const GridBox = styled.div`
    display: flex;
    height: 289px;
    overflow: hidden;
    color: #000;
`;

const GridRows = styled.div`
    flex: 1;
    min-width: 0;
    background: #fff;
`;

const GridHead = styled.div`
    height: 35px;
    padding-left: 2px;
    line-height: 36px;
    background: #dadada;
`;

const GridRow = styled.div`
    display: grid;
    grid-template-columns: 150px 164px;
    height: 35px;
    padding-left: 13px;
    border-bottom: 1px dashed ${p => (p.$bare ? "transparent" : "#8a8a8a")};
    color: ${p => (p.$off ? "#777" : "#000")};
    line-height: 31px;
    white-space: nowrap;
`;

const ScaleName = styled.span`
    display: flex;
    justify-content: space-between;
    padding-right: 8px;
`;

const GridValue = styled.span`
    padding-left: 2px;
`;

const GridInput = styled.input`
    width: 164px;
    height: 34px;
    padding: 0 7px 3px;
    border: 1px solid #000;
    border-bottom: 0;
    background: #fff;
`;

const GridButton = styled.button`
    width: 164px;
    height: 33px;
    padding: 0;
    border: 1px solid #adadad;
    border-width: 1px 2px 2px 1px;
    background: #e1e1e1;
`;

const DockFoot = styled.div`
    display: flex;
    justify-content: space-between;
    height: 46px;
    padding: 2px 2px 5px;
    a { color: #0066cc; line-height: 35px; text-underline-offset: 3px; text-decoration-thickness: 1px; }
    button {
        width: 130px;
        border: 1px solid #bfbfbf;
        background: #ccc;
        color: #838383;
    }
`;

const TreeBox = styled.div`
    display: flex;
    flex: 1;
    min-height: 0;
    overflow: hidden;
    color: #000;
`;

const Tree = styled.ul`
    flex: 1;
    min-width: 0;
    margin: 0;
    overflow: hidden;
    padding: 1px 0 0;
    list-style: none;
    background: #fff;
`;

const TreeItem = styled.li`
    display: flex;
    align-items: center;
    height: 31px;
    padding-left: ${p => [5, 40, 85][p.$level]}px;
    white-space: nowrap;
    &:nth-child(5n) { height: 30px; }
`;

const Expander = styled.button`
    display: flex;
    flex: none;
    align-items: center;
    justify-content: center;
    width: 18px;
    height: 18px;
    padding: 0;
    border: 1px solid #8c8c8c;
    background: linear-gradient(#fff, #e4e4e4);
`;

const Dots = styled.span`
    flex: none;
    width: ${p => p.$w}px;
    border-top: 1px ${p => (p.$hide ? "none" : "dashed")} #999;
`;

const TreeText = styled.span`
    margin-left: ${p => p.$gap || 0}px;
    padding: 0 2px;
    background: ${p => (p.$sel ? "#e1e1e1" : "none")};
`;

const Docs = styled.div`
    display: flex;
    flex-direction: column;
    min-width: 0;
    overflow: hidden;
`;

const DocTabs = styled.div`
    display: flex;
    flex: none;
    height: 35px;
`;

const DocTab = styled.button`
    display: flex;
    align-items: center;
    gap: 13px;
    width: 224px;
    padding: 0 9px;
    border: 0;
    background: ${p => (p.$active ? "#fff" : "none")};
    color: #333;
    font-weight: ${p => (p.$active ? 700 : 400)};
    svg:last-child:not(:first-child) { margin-left: auto; }
`;

const Canvas = styled.div`
    flex: 1;
    display: flex;
    justify-content: center;
    align-items: flex-start;
    padding: 114px 0 0 35px;
    background: #fff;
`;

/* marked-up area with the two call-outs on top of the plan */
const Marked = styled.div`
    position: relative;
    padding: 21px 28px 15px 14px;
    border: 5px solid #ed1c24;
    border-radius: 10px;
`;

const Callout = styled.div`
    position: absolute;
    left: ${p => p.$x}px;
    top: ${p => p.$y}px;
    width: ${p => p.$w}px;
    height: ${p => p.$h}px;
    border: 5px solid #ed1c24;
    border-radius: 10px;
`;

const Arrow = styled.svg`
    position: absolute;
    left: 30px;
    top: 485px;
    pointer-events: none;
`;

const Close = () => (
    <svg width="18" height="18" viewBox="0 0 18 18">
        <path d="M2 2L16 16M16 2L2 16" stroke="#333" strokeWidth="3" />
    </svg>
);

const Chain = ({ x, y, off }) => (
    <g fill="none" stroke={off ? "#b0b0b0" : "#b07800"} strokeWidth="5">
        <rect x={x} y={y} width="12" height="8" rx="4" />
        <rect x={x + 12} y={y} width="12" height="8" rx="4" />
        <g stroke={off ? "#d0d0d0" : "#f5c535"} strokeWidth="3">
            <rect x={x} y={y} width="12" height="8" rx="4" />
            <rect x={x + 12} y={y} width="12" height="8" rx="4" />
            <path d={`M${x + 7} ${y + 4}H${x + 17}`} />
        </g>
    </g>
);

const Pic = ({ children, w = 56 }) => (
    <svg width={w} height="56" viewBox={`0 0 ${w} 56`}>{children}</svg>
);

const Sheet = ({ x = 8, off }) => (
    <g stroke={off ? "#b5b5b5" : "#4a505c"} strokeWidth="2" strokeLinejoin="round">
        <path d={`M${x} 2H${x + 31}L${x + 44} 15V54H${x}Z`} fill={off ? "#e4e4e4" : "#eef0f4"} />
        <path d={`M${x + 31} 2V15H${x + 44}Z`} fill={off ? "#aaa" : "#fff"} />
    </g>
);

const icons = {
    revit: (
        <Pic>
            <path d="M2 8L7 5V54L2 48Z" fill="#4a86e8" />
            <path d="M5 6H46V40H5Z" fill="#fff" stroke="#1450b4" strokeWidth="2" />
            <path d="M4 40H47V55H6Z" fill="#0b3a94" />
            <text x="17" y="35" fontSize="26" fontWeight="700" fill="#146ef5">R</text>
            <text x="13" y="53" fontSize="13" fontWeight="700" fill="#fff">RVT</text>
            <Chain x={30} y={5} />
        </Pic>
    ),
    ifc: (
        <Pic>
            <g fill="none" strokeWidth="7" strokeLinejoin="round">
                <path d="M36 46L48 36L36 24L22 38Z" stroke="#009aa6" />
                <path d="M20 52L6 38L18 26L31 39Z" stroke="#a9178e" />
                <path d="M36 6L50 20L38 32L25 19Z" stroke="#e6003c" />
                <path d="M14 27L6 20L20 6L31 17L20 29" stroke="#0b4f9e" />
            </g>
            <Chain x={29} y={44} />
        </Pic>
    ),
    cad: (
        <Pic>
            <Sheet />
            <text x="11" y="50" fontSize="16" fontWeight="700" fill="#5a5f69">CAD</text>
            <Chain x={5} y={14} />
        </Pic>
    ),
    topo: (
        <Pic>
            <rect x="2" y="4" width="50" height="50" fill="#cfe6b8" stroke="#4a505c" strokeWidth="2" />
            <path d="M2 21Q34 22 35 54M2 42Q14 28 22 54M26 5Q46 20 47 42" fill="none" stroke="#4a6a4a" strokeWidth="2" />
            <Chain x={31} y={43} />
        </Pic>
    ),
    dwf: (
        <Pic>
            <g fill="#eef0f4" stroke="#4a505c" strokeWidth="2">
                <path d="M14 12H54V54H14Z" /><path d="M8 7H48V49H8Z" />
                <path d="M9 28Q0 24 4 17Q1 8 11 7Q15 0 22 5Q31 2 33 10Q42 13 37 22Q39 32 30 33Q25 40 18 35Q8 36 9 28Z" fill="#fff" />
            </g>
            <Chain x={28} y={44} />
        </Pic>
    ),
    decal: (
        <Pic>
            <path d="M18 24L26 20H54V46L46 54H18Z" fill="#dfe3e9" stroke="#4a505c" strokeWidth="2" />
            <path d="M18 24H46V54M46 24L54 20" fill="none" stroke="#8a919c" strokeWidth="2" />
            <rect x="2" y="2" width="28" height="26" fill="#a9d4f2" stroke="#4a505c" strokeWidth="2" />
            <path d="M3 27V20L12 12L29 26V28Z" fill="#4a505c" /><circle cx="23" cy="9" r="3" fill="#ffe08a" />
            <path d="M12 30V42H26M21 36L28 42L21 48" fill="none" stroke="#000" strokeWidth="3" />
        </Pic>
    ),
    cloud: (
        <Pic>
            <path d="M8 36Q-1 30 4 20Q4 12 14 12Q22 3 32 8Q42 6 46 16Q56 22 52 34Q54 44 42 46Q30 54 20 47Q8 48 8 36Z" fill="#f3f4f7" stroke="#4a505c" strokeWidth="2" />
            <g fill="#fff" stroke="#3a404c" strokeWidth="2">
                <path d="M19 14H25V20H19ZM31 20H37V26H31ZM10 25H16V31H10ZM23 32H29V38H23ZM37 31H43V37H37Z" />
            </g>
            <Chain x={29} y={44} />
        </Pic>
    ),
    coord: (
        <Pic>
            {[0, 1, 2].map(r => [0, 1, 2].map(c => (
                <g key={r + "-" + c} stroke="#7b7f87" strokeWidth="2" strokeLinejoin="round">
                    <path fill="#eceef1" d={`M${24 + (r - c) * 7} ${4 + (r + c) * 4}l7 4l-7 4l-7 -4Z`} />
                    <path fill="#dcdfe3" d={`M${3 + c * 7} ${16 + c * 4 + r * 9}l7 4v9l-7 -4Z`} />
                    <path fill="#b4b8bf" d={`M${24 + c * 7} ${28 - c * 4 + r * 9}l7 -4v9l-7 4Z`} />
                </g>
            )))}
            <path d="M43 24V8Q44 3 49 3Q54 3 54 8V26Q53 31 48 31Q44 30 44 26M49 9V24" fill="none" stroke="#1f5fa8" strokeWidth="2" />
        </Pic>
    ),
    pdf: (
        <Pic>
            <Sheet off />
            <rect x="8" y="34" width="45" height="21" fill="#a8a8a8" />
            <text x="13" y="50" fontSize="16" fontWeight="700" fill="#eee">PDF</text>
            <Chain x={6} y={9} off />
        </Pic>
    ),
    image: (
        <Pic>
            <rect x="5" y="4" width="48" height="50" fill="#e2e2e2" stroke="#bcbcbc" strokeWidth="2" />
            <path d="M6 42L18 28L28 34L52 52V54H6Z" fill="#b5b5b5" /><circle cx="41" cy="18" r="4" fill="#f4f4f4" />
            <Chain x={3} y={10} off />
        </Pic>
    ),
    manage: (
        <Pic>
            <path d="M3 12H40L50 22V50H3Z" fill="#eef0f4" stroke="#4a505c" strokeWidth="2" />
            <path d="M40 12V22H50Z" fill="#fff" stroke="#4a505c" strokeWidth="2" />
            <g fill="none" stroke="#555" strokeWidth="3"><rect x="10" y="2" width="8" height="11" rx="4" /><rect x="10" y="16" width="8" height="11" rx="4" /><path d="M14 9V20" /></g>
            <rect x="33" y="27" width="21" height="27" fill="#fff" stroke="#4a505c" strokeWidth="2" />
            <rect x="37" y="30" width="9" height="9" fill="#1f5fa8" />
            <path d="M49 30V39M37 44H50M37 49H50" stroke="#555" strokeWidth="2" />
        </Pic>
    ),
    importCad: (
        <Pic>
            <Sheet />
            <text x="11" y="50" fontSize="16" fontWeight="700" fill="#5a5f69">CAD</text>
            <path d="M2 19H22V12L34 24L22 36V28H2Z" fill="#2f8df0" stroke="#1460b8" strokeWidth="1.500" />
        </Pic>
    ),
};

const linkTools = [
    ["revit", "Link\nRevit", 66],
    ["ifc", "Link\nIFC", 66],
    ["cad", "Link\nCAD", 66],
    ["topo", "Link\nTopography", 126],
    ["dwf", "DWF\nMarkup", 94],
    ["decal", "Decal", 78],
    ["cloud", "Point\nCloud", 76],
    ["coord", "Coordination\nModel", 124],
    ["pdf", "Link\nPDF", 74, true],
    ["image", "Link\nImage", 60, true],
    ["manage", "Manage\nLinks", 94],
];

const Caret = ({ color = "#333" }) => <Tri w={9} h={5} color={color} />;

const Quick = () => (
    <QuickBar>
        <ToolGroup $gap={10} $right={8}>
            <QuickIcon $w={36} aria-label="Revit menu">
                <svg width="36" height="38" viewBox="0 0 36 38">
                    <path d="M1 3L6 0V30L1 32Z" fill="#5a9bf0" /><path d="M5 0H33V28H5Z" fill="#146ef5" />
                    <path d="M33 7H35V38H2V28H33Z" fill="#0b3a94" />
                    <text x="13" y="21" fontSize="20" fontWeight="700" fill="#fff">R</text>
                </svg>
            </QuickIcon>
            <QuickIcon aria-label="Home">
                <svg width="26" height="26" viewBox="0 0 26 26">
                    <rect x="1" y="1" width="24" height="24" rx="1" fill="#eee" stroke="#4a505c" strokeWidth="2" />
                    <path d="M1 1H25V7H1Z" fill="#4a505c" /><path d="M5 11H9M5 15H9M5 19H9M15 11H21M15 15H21M15 19H21M11 7V25" stroke="#4a505c" strokeWidth="2" />
                </svg>
            </QuickIcon>
        </ToolGroup>
        <QuickIcon aria-label="Open">
            <svg width="28" height="26" viewBox="0 0 28 26" fill="#d9dce1" stroke="#4a505c" strokeWidth="2" strokeLinejoin="round">
                <path d="M1 22V4H8L11 8H20V12" /><path d="M1 22L8 12H27L20 22Z" fill="#bfc4cb" />
            </svg>
        </QuickIcon>
        <QuickIcon aria-label="Save">
            <svg width="28" height="28" viewBox="0 0 28 28">
                <path d="M1 1H27V27H3L1 25Z" fill="#555b66" stroke="#3a404a" strokeWidth="2" />
                <path d="M6 1H22V13H6ZM8 18H20V27H8Z" fill="#eef0f3" /><path d="M10 20H13V25H10Z" fill="#3a404a" />
            </svg>
        </QuickIcon>
        <QuickIcon aria-label="Sync">
            <svg width="28" height="28" viewBox="0 0 28 28">
                <Cube x={1} y={1} w={22} h={23} stroke="#8d8d8d" fill="#dedede" />
                <path d="M6 3L17 9M17 3L6 9" stroke="#8d8d8d" />
                <circle cx="21" cy="20" r="6" fill="#a0a0a0" />
            </svg>
        </QuickIcon>
        <Caret />
        <QuickIcon aria-label="Undo">
            <svg width="28" height="24" viewBox="0 0 28 24">
                <path d="M1 10L11 1V7H18Q27 8 27 22H21Q21 14 16 14H11V20Z" fill="#e3e6ea" stroke="#4a505c" strokeWidth="2" strokeLinejoin="round" />
            </svg>
        </QuickIcon>
        <Caret />
        <QuickIcon aria-label="Redo">
            <svg width="28" height="24" viewBox="0 0 28 24">
                <path d="M27 10L17 1V7H10Q1 8 1 22H7Q7 14 12 14H17V20Z" fill="#d3d3d3" stroke="#a0a0a0" strokeWidth="2" strokeLinejoin="round" />
            </svg>
        </QuickIcon>
        <Caret color="#777" />
        <QuickIcon aria-label="Print">
            <svg width="28" height="28" viewBox="0 0 28 28" fill="#f2f3f5" stroke="#4a505c" strokeWidth="2">
                <path d="M6 1H22V10H6Z" /><path d="M1 10H27V22H1Z" fill="#c9cdd3" /><path d="M3 14H25" /><path d="M6 18H22V27H6Z" fill="#dcecf7" />
            </svg>
        </QuickIcon>
        <QuickIcon aria-label="Export PDF">
            <svg width="28" height="30" viewBox="0 0 28 30">
                <path d="M1 1H17L23 8V29H1Z" fill="#f4f5f7" stroke="#8a8f98" /><path d="M17 1L23 8H17Z" fill="#d9291c" />
                <path d="M0 17H24V29H0Z" fill="#d9291c" /><text x="2" y="28" fontSize="11" fontWeight="700" fill="#fff">PDF</text>
                <path d="M10 11H19V7L27 13L19 19V15H10Z" fill="#3f9de0" stroke="#1b6fb0" />
            </svg>
        </QuickIcon>
        <QuickSep />
        <QuickIcon aria-label="Dimension">
            <svg width="28" height="30" viewBox="0 0 28 30" fill="none" stroke="#4a505c" strokeWidth="2">
                <path d="M1 1V22M27 1V14M3 7H25M8 3L3 7L8 11M20 3L25 7L20 11" />
                <path d="M20 21V29" /><path d="M15 13H25L23 16V19L26 22H14L17 19V16Z" fill="#f08a4a" stroke="#b04a14" />
            </svg>
        </QuickIcon>
        <QuickSep />
        <QuickIcon aria-label="Measure">
            <svg width="28" height="22" viewBox="0 0 28 22">
                <path d="M2 6H26M8 1L2 6L8 11M20 1L26 6L20 11" fill="none" stroke="#4a505c" strokeWidth="2" />
                <rect x="1" y="14" width="26" height="7" fill="#f5c535" stroke="#b07800" /><path d="M6 14V18M11 14V18M16 14V18M21 14V18" stroke="#b07800" />
            </svg>
        </QuickIcon>
        <Caret />
        <QuickIcon aria-label="Aligned">
            <svg width="28" height="28" viewBox="0 0 28 28" fill="none" stroke="#4a505c" strokeWidth="2">
                <path d="M6 22L22 6M20 1L27 8M1 20L8 27" /><path d="M22 6L14 8L20 14ZM6 22L14 20L8 14Z" fill="#4a505c" stroke="none" />
            </svg>
        </QuickIcon>
        <QuickIcon aria-label="Tag">
            <svg width="28" height="26" viewBox="0 0 28 26" fill="none" stroke="#4a505c" strokeWidth="2">
                <circle cx="17" cy="10" r="8" fill="#eef0f3" /><path d="M9 11H4V18" /><circle cx="4" cy="21" r="3" />
                <path d="M15 8L18 6V15" />
            </svg>
        </QuickIcon>
        <QuickIcon aria-label="Text">
            <svg width="28" height="30" viewBox="0 0 28 30"><text x="3" y="27" fontSize="34" fontWeight="700" fill="#3d3d3d">A</text></svg>
        </QuickIcon>
        <QuickSep />
        <QuickIcon aria-label="3D view"><House /></QuickIcon>
        <Caret />
        <QuickIcon aria-label="Section">
            <svg width="26" height="26" viewBox="0 0 26 26">
                <path d="M10 1L25 13L10 25Z" fill="#8a8a8a" /><circle cx="10" cy="13" r="8" fill="#ddd" stroke="#909090" strokeWidth="2" />
            </svg>
        </QuickIcon>
        <QuickIcon $w={20} aria-label="More">
            <svg width="16" height="14" viewBox="0 0 16 14" fill="#333"><path d="M0 0L7 7L0 14ZM8 0L16 7L8 14Z" /></svg>
        </QuickIcon>
        <DocTitle>Project1 - 3D Vi...</DocTitle>
        <QuickIcon $w={10} aria-label="Collapse search">
            <svg width="8" height="14" viewBox="0 0 8 14"><path d="M8 0V14L0 7Z" fill="#333" /></svg>
        </QuickIcon>
        <QuickIcon aria-label="Search">
            <svg width="28" height="28" viewBox="0 0 28 28" fill="#dfe2e6" stroke="#2f343d" strokeWidth="2">
                <path d="M6 2H12V26H1V17Z" fill="#7b828e" /><path d="M22 2H16V26H27V17Z" fill="#7b828e" /><path d="M12 6H16V15H12Z" /><path d="M2 18H10V26H2ZM18 18H26V26H18Z" />
            </svg>
        </QuickIcon>
    </QuickBar>
);

const tree = [
    { level: 0, text: "Views (all)", open: true, root: true },
    { level: 1, text: "Floor Plans", open: true, plain: true },
    { level: 2, text: "Level 1" },
    { level: 2, text: "Level 2" },
    { level: 2, text: "Site" },
    { level: 1, text: "Ceiling Plans", open: true },
    { level: 2, text: "Level 1", plain: true },
    { level: 2, text: "Level 2" },
    { level: 1, text: "3D Views" },
    { level: 1, text: "Elevations (Building Elevation)", open: true },
    { level: 2, text: "East" },
    { level: 2, text: "North", plain: true },
    { level: 2, text: "South", plain: true },
    { level: 2, text: "West" },
];

const ViewIcon = () => (
    <svg width="28" height="28" viewBox="0 0 28 28" fill="none" stroke="#666" strokeWidth="2">
        <rect x="1" y="1" width="26" height="26" strokeDasharray="6 2" />
        <rect x="5" y="5" width="18" height="19" fill="#f2f2f2" />
    </svg>
);

const TreeNode = ({ item }) => (
    <TreeItem $level={item.level}>
        {item.level < 2 && (
            <Expander aria-label={item.open ? "Collapse" : "Expand"}>
                <svg width="12" height="12" viewBox="0 0 12 12">
                    <path d={item.open ? "M1 6H11" : "M1 6H11M6 1V11"} stroke="#3a55a0" strokeWidth="2" />
                </svg>
            </Expander>
        )}
        {item.root && (
            <>
                <Dots $w={11} $hide />
                <svg width="28" height="28" viewBox="0 0 28 28" fill="none" stroke="#666b75" strokeWidth="3">
                    <path d="M2 8V2H8M20 2H26V8M2 20V26H8M26 20V26H20" />
                    <path d="M8 11L11 7H21V17L17 21H8Z" fill="#e8eaee" strokeWidth="2" />
                </svg>
                <TreeText $sel $gap={3}>{item.text}</TreeText>
            </>
        )}
        {item.level === 1 && <><Dots $w={14} $hide={item.plain} /><TreeText>{item.text}</TreeText></>}
        {item.level === 2 && <><Dots $w={20} $hide={item.plain} /><ViewIcon /><TreeText $gap={2}>{item.text}</TreeText></>}
    </TreeItem>
);

const PropertiesDock = () => (
    <Dock>
        <DockHead $line>
            Properties
            <PlainButton aria-label="Close properties"><Close /></PlainButton>
        </DockHead>
        <TypeBox>
            <TypeThumb><House size={58} /></TypeThumb>
            <TypeName>3D View <Tri w={14} h={8} color="#333" /></TypeName>
        </TypeBox>
        <FilterRow>
            <FilterSelect aria-label="Filter" defaultValue="3d"><option value="3d">{"3D View: {3D}"}</option></FilterSelect>
            <EditType $gap={3}>
                <svg width="11" height="12" viewBox="0 0 11 12" fill="none" stroke="#555"><path d="M0 2H7M0 6H4M5 5H10V11H5Z" /><path d="M7 7V9" stroke="#15c" strokeWidth="2" /></svg>
                Edit Type
            </EditType>
        </FilterRow>
        <GridBox>
            <GridRows>
                <GridHead>Graphics</GridHead>
                <GridRow><label htmlFor="scale">View Scale</label><GridInput id="scale" defaultValue="1 : 100" /></GridRow>
                <GridRow $off><ScaleName>Scale Value <span>1:</span></ScaleName><GridValue>100</GridValue></GridRow>
                <GridRow><span>Detail Level</span><GridValue>Medium</GridValue></GridRow>
                <GridRow><span>Parts Visibility</span><GridValue>Show Original</GridValue></GridRow>
                <GridRow><span>Visibility/Grap...</span><GridButton>Edit...</GridButton></GridRow>
                <GridRow $bare><span>Graphic Displa...</span><GridButton>Edit...</GridButton></GridRow>
                <GridRow $bare><span>Discipline</span><GridValue>Coordination</GridValue></GridRow>
                <GridRow $bare><span>Show Hidden Li...</span><GridValue>By Discipline</GridValue></GridRow>
            </GridRows>
            <Scroll $w={30} $top={5} $bottom={3}>
                <Chevron dir="up" color="#555" w={14} />
                <Thumb $h={51} />
                <Chevron dir="down" color="#555" w={14} />
            </Scroll>
        </GridBox>
        <DockFoot>
            <a href="#help">Properties help</a>
            <button>Apply</button>
        </DockFoot>
    </Dock>
);

const BrowserDock = () => (
    <Dock $grow>
        <DockHead>
            Project Browser - Project1
            <PlainButton aria-label="Close browser"><Close /></PlainButton>
        </DockHead>
        <TreeBox>
            <Tree>
                {tree.map((item, i) => <TreeNode key={i} item={item} />)}
                <TreeItem $level={0}>
                    <Dots $w={10} $hide />
                    <Dots $w={20} />
                    <svg width="27" height="28" viewBox="0 0 27 28">
                        <rect x="1" y="1" width="25" height="26" fill="#e6e6e6" stroke="#555b66" strokeWidth="2" />
                        <path d="M1 3H26" stroke="#555b66" strokeWidth="4" /><path d="M3 8H8V14H3Z" fill="#555b66" /><path d="M11 9H23M11 13H23" stroke="#555b66" strokeWidth="2" />
                    </svg>
                    <TreeText $gap={3}>Legends</TreeText>
                </TreeItem>
            </Tree>
            <Scroll $w={30} $top={5} $bottom={0}>
                <Chevron dir="up" color="#555" w={14} />
                <Thumb $h={306} />
                <Chevron dir="down" color="#555" w={14} />
            </Scroll>
        </TreeBox>
    </Dock>
);

const RevitWindow = () => (
    <Revit>
        <Quick />
        <RibbonTabs>
            <RibbonTab $file $pad={23}>File</RibbonTab>
            {["Architecture", "Structure", "Steel", "Precast", "Systems", "Insert", "Annotate", "Analyze", "Massing & Site"].map(name => (
                <RibbonTab key={name} $active={name === "Insert"}>{name}</RibbonTab>
            ))}
        </RibbonTabs>
        <Ribbon>
            <RibbonGroup $pad={11} $w={101}>
                <RibbonRow>
                    <RibbonButton $w={77} $active>
                        <Pic w={40}>
                            <path d="M12 8V42L20 35L25 46L31 43L26 32L35 31Z" fill="#fff" stroke="#4a505c" strokeWidth="2" />
                        </Pic>
                        Modify
                    </RibbonButton>
                </RibbonRow>
                <RibbonLabel>Select <Tri w={13} h={8} color="#333" /></RibbonLabel>
            </RibbonGroup>
            <RibbonGroup $pad={4}>
                <RibbonRow>
                    {linkTools.map(([icon, label, w, off]) => (
                        <RibbonButton key={icon} $w={w} $off={off} disabled={off}>
                            {icons[icon]}
                            {label}
                            {icon === "decal" && <Tri w={9} h={5} color="#333" />}
                        </RibbonButton>
                    ))}
                </RibbonRow>
                <RibbonLabel>Link</RibbonLabel>
            </RibbonGroup>
            <RibbonGroup $w={180}>
                <RibbonRow>
                    <RibbonButton $w={78}>{icons.importCad}{"Import\nCAD"}</RibbonButton>
                </RibbonRow>
                <RibbonLabel>Import</RibbonLabel>
            </RibbonGroup>
        </Ribbon>
        <OptionsBar />
        <Work>
            <Docks>
                <PropertiesDock />
                <BrowserDock />
            </Docks>
            <Docs>
                <DocTabs>
                    <DocTab>
                        <svg width="28" height="26" viewBox="0 0 28 26" fill="#d6d6d6" stroke="#8b8f96" strokeWidth="2">
                            <path d="M1 1H18V5H27V25H12V22H1Z" /><path d="M11 20V10H24" fill="none" strokeDasharray="4 2" />
                        </svg>
                        Level 1
                    </DocTab>
                    <DocTab $active><House size={27} />{"{3D}"}<Close /></DocTab>
                </DocTabs>
                <Canvas>
                    <Marked>
                        <ImportedPlan />
                        <Callout $x={191} $y={42} $w={69} $h={57} />
                        <Callout $x={351} $y={254} $w={187} $h={126} />
                    </Marked>
                </Canvas>
            </Docs>
        </Work>
        <Arrow width="460" height="540" viewBox="1291 517 460 540">
            <path d="M1294 653H1515V523L1736 783L1515 1044V914H1294Z" fill="none" stroke="#ed1c24" strokeWidth="5" strokeLinejoin="round" />
        </Arrow>
    </Revit>
);

export default () => {
    return (
        <>
            <GlobalStyle />
            <Desktop>
                <SolibriWindow>
                    <ViewStage><ShadedPlan /></ViewStage>
                </SolibriWindow>
                <RevitWindow />
            </Desktop>
        </>
    );
};
